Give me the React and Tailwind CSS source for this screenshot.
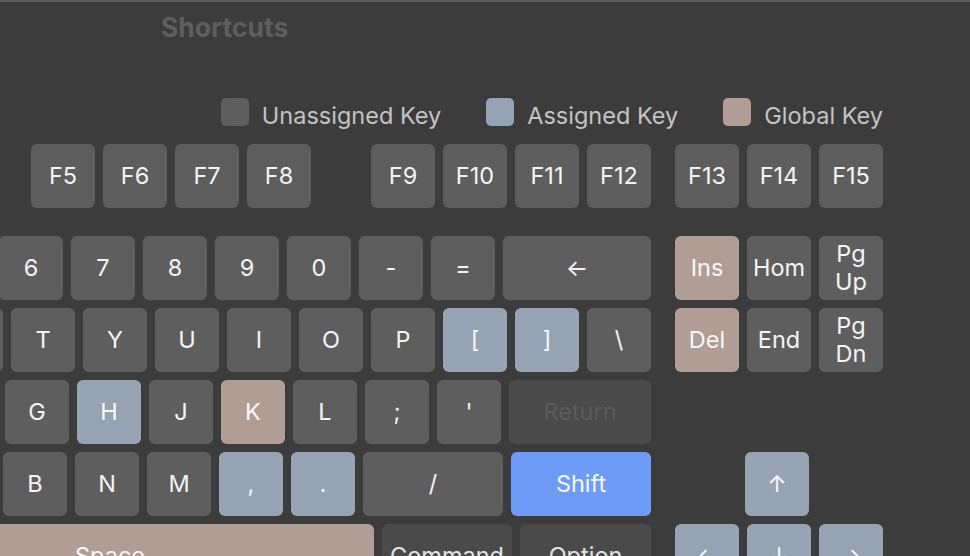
import clsx from "clsx";

const tone = {
  free: "bg-[#5e5e5e] text-[#f4f4f4]",
  set: "bg-[#95a3b2] text-[#f8f8f8]",
  global: "bg-[#b09d94] text-[#f8f8f8]",
  mod: "bg-[#6d9bf5] text-[#f8f8f8]",
  off: "bg-[#4a4a4a] text-[#e4e4e4]",
  dim: "bg-[#4a4a4a] text-[#5c5c5c]",
};

function Key({ label, w = "w-16", t = "free", className }) {
  return (
    <div
      className={clsx(
        "flex h-16 shrink-0 items-center justify-center whitespace-pre-line rounded-md text-center text-[23.5px] leading-[28px]",
        w,
        tone[t],
        className
      )}
    >
      {label}
    </div>
  );
}

function Row({ keys, className }) {
  return (
    <div className={clsx("flex gap-2", className)}>
      {keys.map((k, i) => (
        <Key key={i} {...k} />
      ))}
    </div>
  );
}

const k = (label, t, w) => ({ label, t, w });

// main block, rows start off-screen on the left
const fnRow0 = ["F1", "F2", "F3", "F4"].map((l) => k(l));
const fnRow1 = ["F5", "F6", "F7", "F8"].map((l) => k(l));
const fnRow2 = ["F9", "F10", "F11", "F12"].map((l) => k(l));

const numRow = [..."`1234567890-="].map((l) => k(l)).concat([k("←", "free", "w-[148px]")]);
const qRow = [k("Tab", "free", "w-[148px]")]
  .concat([..."QWERTYUIOP"].map((l) => k(l)))
  .concat([k("[", "set"), k("]", "set"), k("\\")]);
const aRow = [k("Caps", "free", "w-[142px]")]
  .concat([k("A"), k("S"), k("D"), k("F"), k("G"), k("H", "set"), k("J"), k("K", "global"), k("L"), k(";"), k("'")])
  .concat([k("Return", "dim", "w-[142px]")]);
const zRow = [k("Shift", "free", "w-[140px]")]
  .concat([k("Z"), k("X"), k("C"), k("V"), k("B"), k("N"), k("M"), k(",", "set"), k(".", "set")])
  .concat([k("/", "free", "w-[140px]"), k("Shift", "mod", "w-[140px]")]);
const spaceRow = [k("Space", "global", "w-[528px]"), k("Command", "off", "w-[130px]"), k("Option", "off", "w-[131px]")];

function Legend({ color, label }) {
  return (
    <div className="flex items-start gap-[13px]">
      <div className={clsx("h-7 w-7 rounded-[5px]", color)} />
      <span className="pt-[4px] text-[23.5px] leading-7 text-[#c4c4c4]">{label}</span>
    </div>
  );
}

export default function App() {
  return (
    <div className="h-[556px] w-[970px] overflow-hidden border-t-2 border-[#5b5b5b] bg-[#3c3c3c] font-['Inter','Liberation_Sans',sans-serif]">
      <div className="pl-[161px] pt-[11px] text-[26.5px] font-bold leading-[29px] text-[#5e5e5e]">Shortcuts</div>

      <div className="mt-[56px] flex h-7 w-[883px] justify-end gap-[45px]">
        <Legend color="bg-[#5e5e5e]" label="Unassigned Key" />
        <Legend color="bg-[#95a3b2]" label="Assigned Key" />
        <Legend color="bg-[#b09d94]" label="Global Key" />
      </div>

      <div className="mt-[18px] flex gap-6">
        <div className="flex w-[651px] shrink-0 flex-col gap-2">
          <div className="mb-5 ml-[-309px] flex gap-[60px]">
            <Row keys={fnRow0} />
            <Row keys={fnRow1} />
            <Row keys={fnRow2} />
          </div>
          <Row keys={numRow} className="ml-[-433px]" />
          <Row keys={qRow} className="ml-[-433px]" />
          <Row keys={aRow} className="ml-[-433px]" />
          <Row keys={zRow} className="ml-[-433px]" />
          <Row keys={spaceRow} className="ml-[-154px]" />
        </div>

        <div className="flex shrink-0 flex-col gap-2">
          <Row keys={[k("F13"), k("F14"), k("F15")]} className="mb-5" />
          <Row keys={[k("Ins", "global"), k("Hom"), k("Pg\nUp")]} />
          <Row keys={[k("Del", "global"), k("End"), k("Pg\nDn")]} />
          <div className="h-16" />
          <Row keys={[k("↑", "set")]} className="ml-[70px]" />
          <Row keys={[k("←", "set"), k("↓", "set"), k("→", "set")]} />
        </div>
      </div>
    </div>
  );
}
